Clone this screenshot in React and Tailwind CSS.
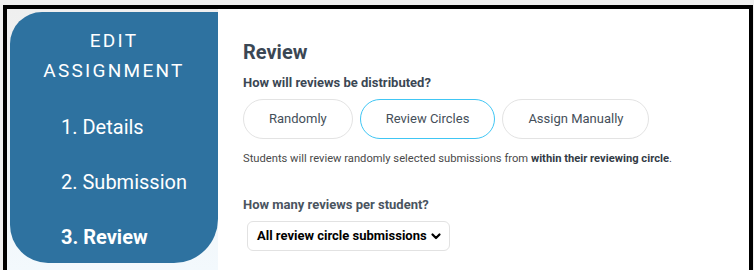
import React from "react";

const OPTIONS = ["Randomly", "Review Circles", "Assign Manually"];

const Sidebar = () => (
  <div className="w-[211px] shrink-0 bg-gradient-to-b from-[#efefef] to-[#f3f9fd] pl-[3px] pt-[3px]">
    <div className="h-[251px] w-[208px] bg-[#2e72a0] rounded-tl-[32px] rounded-bl-[38px] rounded-br-[44px] text-white">
      <div className="pt-[14px] text-center text-[19px] leading-[30px] tracking-[0.12em]">
        <div>EDIT</div>
        <div>ASSIGNMENT</div>
      </div>
      <ul className="mt-[29px] pl-[51px] text-[20px] leading-[24px]">
        <li className="h-[55px]">1. Details</li>
        <li className="h-[55px]">2. Submission</li>
        <li className="font-bold">3. Review</li>
      </ul>
    </div>
  </div>
);

export default function App() {
  const active = "Review Circles";

  return (
    <div className="h-[270px] overflow-hidden bg-[#f0f0f0] pl-[3px] pt-[5px] font-['Roboto',sans-serif]">
      <div className="flex h-[270px] w-[750px] border-[4px] border-black bg-white">
        <Sidebar />
        <div className="flex-1 pl-[25px] pt-[30px] text-[#3b4754]">
          <h2 className="text-[20px] font-bold leading-[26px]">Review</h2>
          <p className="mt-[10px] text-[13px] font-bold leading-[16px]">
            How will reviews be distributed?
          </p>
          <div className="mt-[8px] flex gap-[7px]">
            {OPTIONS.map((o) => (
              <button
                key={o}
                className={
                  o === active
                    ? "h-[40px] rounded-full border border-[#40c6f4] bg-white px-[25px] text-[13px] text-[#454f5a]"
                    : "h-[40px] rounded-full border border-[#e3e3e3] bg-white px-[25px] text-[13px] text-[#454f5a]"
                }
              >
                {o}
              </button>
            ))}
          </div>
          <p className="mt-[13px] text-[11.2px] leading-[14px] text-[#4a4a4a]">
            Students will review randomly selected submissions from{" "}
            <span className="font-bold text-[#333b45]">
              within their reviewing circle
            </span>
            .
          </p>
          <p className="mt-[31px] text-[13px] font-bold leading-[16px] text-[#4a5460]">
            How many reviews per student?
          </p>
          <div className="ml-[4px] mt-[8px] flex h-[30px] w-[203px] items-center justify-between rounded-[6px] border border-[#e2e2e2] pl-[9px] pr-[7px] text-[13px] font-bold whitespace-nowrap text-black">
            <span>All review circle submissions</span>
            <svg width="12" height="12" viewBox="0 0 24 24" fill="none" stroke="black" strokeWidth="4.5" strokeLinecap="round" strokeLinejoin="round">
              <path d="M5 9l7 7 7-7" />
            </svg>
          </div>
        </div>
      </div>
    </div>
  );
}
